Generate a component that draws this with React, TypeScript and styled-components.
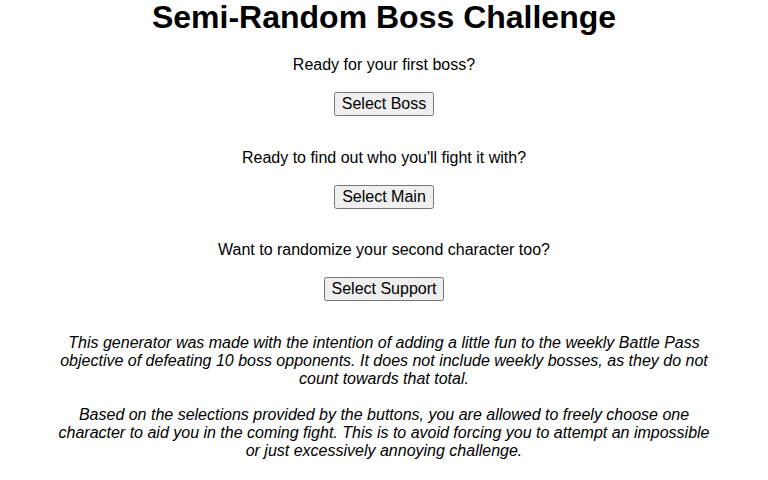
import styled, {createGlobalStyle} from "styled-components";

const GlobalStyle = createGlobalStyle`
  body {
    margin: 0;
    background: #ffffff;
    color: #000000;
    font-family: "Liberation Sans", Arial, sans-serif;
  }
`

const Page = styled.div`
  display: flex;
  flex-direction: column;
  align-items: center;
  text-align: center;
`

const Title = styled.h1`
  font-size: 32px;
  line-height: 35px;
  font-weight: bold;
  margin: 0 0 21px;
`

const Steps = styled.div`
  display: flex;
  flex-direction: column;
  align-items: center;
  gap: 32.5px;
`

const Step = styled.div`
  display: flex;
  flex-direction: column;
  align-items: center;
  gap: 18px;
`

const Prompt = styled.p`
  margin: 0;
  font-size: 16px;
  line-height: 18px;
`

const PickButton = styled.button`
  font-family: "Liberation Sans", Arial, sans-serif;
  font-size: 16px;
  height: 24px;
  margin: 0;
`

const Notes = styled.div`
  width: 660px;
  margin-top: 32.5px;
  font-style: italic;
  font-size: 16px;
  line-height: 18px;
`

const Note = styled.p`
  margin: 0 0 18px;
`

const steps = [
    {prompt: "Ready for your first boss?", label: "Select Boss"},
    {prompt: "Ready to find out who you'll fight it with?", label: "Select Main"},
    {prompt: "Want to randomize your second character too?", label: "Select Support"},
]

const App = () => {
    return (
        <>
            <GlobalStyle/>
            <Page>
                <Title>Semi-Random Boss Challenge</Title>
                <Steps>
                    {steps.map(step => (
                        <Step key={step.label}>
                            <Prompt>{step.prompt}</Prompt>
                            <PickButton>{step.label}</PickButton>
                        </Step>
                    ))}
                </Steps>
                <Notes>
                    <Note>
                        This generator was made with the intention of adding a little fun to the weekly Battle Pass
                        objective of defeating 10 boss opponents. It does not include weekly bosses, as they do not
                        count towards that total.
                    </Note>
                    <Note>
                        Based on the selections provided by the buttons, you are allowed to freely choose one
                        character to aid you in the coming fight. This is to avoid forcing you to attempt an impossible
                        or just excessively annoying challenge.
                    </Note>
                </Notes>
            </Page>
        </>
    )
}

export default App
